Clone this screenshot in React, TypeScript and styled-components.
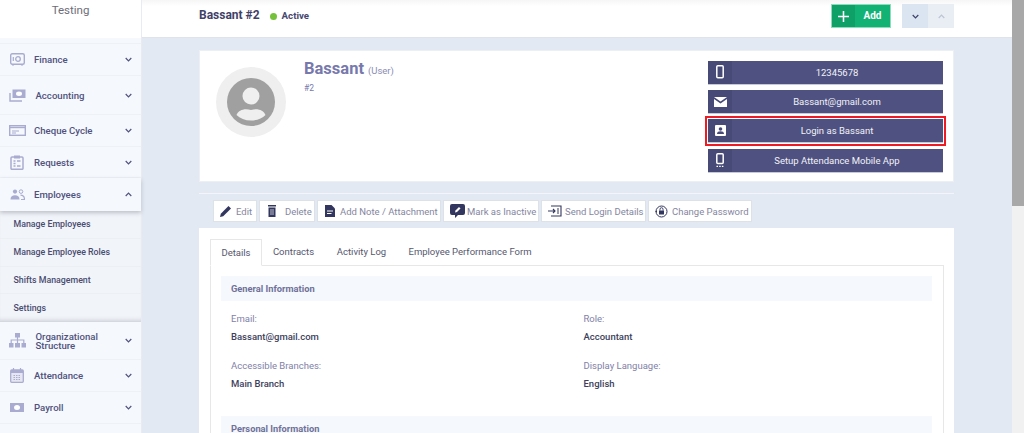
import React from "react";
import styled, { createGlobalStyle } from "styled-components";

const Global = createGlobalStyle`
  html, body { margin: 0; padding: 0; height: 433px; overflow: hidden; background: #e3e9f2; }
  * { box-sizing: border-box; }
  body { font-family: Roboto, "Liberation Sans", sans-serif; }
  svg { flex: none; display: block; }
`;

const Page = styled.div`
  display: flex;
  width: 1024px;
  height: 433px;
  overflow: hidden;
`;

const Sidebar = styled.aside`
  width: 142px;
  flex: none;
  background: #f5f8fc;
  border-right: 1px solid #e8ecf2;
  display: flex;
  flex-direction: column;
  position: relative;
  z-index: 2;
`;

const Brand = styled.div`
  height: 38px;
  background: #fff;
  color: #6d6d78;
  font-size: 11.5px;
  text-align: center;
  padding-top: 3px;
  line-height: 14px;
`;

const Spacer = styled.div`
  height: 6px;
  border-bottom: 1px solid #eef1f6;
`;

const MenuRow = styled.div<{ $h: number; $open?: boolean }>`
  height: ${(p) => p.$h}px;
  flex: none;
  display: flex;
  align-items: center;
  padding: 0 9px 0 9px;
  border-bottom: 1px solid #eef1f6;
  color: #50527e;
  font-size: 9.6px;
  font-weight: 500;
  line-height: 9px;
  ${(p) => (p.$open ? "box-shadow: 0 2px 4px rgba(60,60,80,.28); position: relative; z-index: 1; border-bottom: 0;" : "")}
`;

const MenuIcon = styled.span<{ $w: number; $in?: number }>`
  width: ${(p) => p.$w}px;
  padding-left: ${(p) => p.$in ?? 0}px;
  flex: none;
  display: flex;
  align-items: center;
`;

const MenuLabel = styled.span`
  flex: 1;
`;

const SubMenu = styled.div`
  background: #f1f4f9;
  box-shadow: inset 0 -5px 5px -4px rgba(60,60,80,.25);
  flex: none;
`;

const SubItem = styled.div`
  height: 27.8px;
  padding-left: 13.5px;
  display: flex;
  align-items: center;
  border-bottom: 1px solid #ecf0f5;
  color: #4a4c70;
  font-size: 8.8px;
  font-weight: 500;
  &:last-child { border-bottom: 0; }
`;

const Main = styled.main`
  flex: 1;
  min-width: 0;
  display: flex;
  flex-direction: column;
  background: #e3e9f2;
`;

const TopBar = styled.header`
  height: 38px;
  flex: none;
  background: linear-gradient(#f6f6f6, #fff 6px);
  border-bottom: 1px solid #dfe4ec;
  padding: 4px 58px 0 57px;
  display: flex;
  align-items: flex-start;
`;

const PageTitle = styled.h1`
  margin: 3px 0 0;
  font-size: 12px;
  line-height: 16px;
  font-weight: 700;
  color: #3f4168;
`;

const StatusDot = styled.span`
  width: 7px;
  height: 7px;
  border-radius: 50%;
  background: #76c13a;
  margin: 9px 0 0 10px;
`;

const StatusText = styled.span`
  margin: 4px 0 0 5px;
  font-size: 9.7px;
  line-height: 16px;
  font-weight: 700;
  color: #46486f;
  flex: 1;
`;

const AddButton = styled.div`
  width: 60px;
  height: 24px;
  display: flex;
  background: #12b174;
  border: 1px solid #8fdcbc;
  color: #fff;
  font-size: 10px;
  font-weight: 700;
`;

const AddIcon = styled.span`
  width: 23px;
  background: #0fa068;
  display: flex;
  align-items: center;
  justify-content: center;
`;

const AddLabel = styled.span`
  flex: 1;
  text-align: center;
  line-height: 22px;
`;

const Toggle = styled.div<{ $on?: boolean }>`
  width: 26px;
  height: 24px;
  background: ${(p) => (p.$on ? "#dbe5f1" : "#e9eef5")};
  display: flex;
  align-items: center;
  justify-content: center;
`;

const ToggleGroup = styled.div`
  display: flex;
  margin-left: 11px;
`;

const Content = styled.div`
  padding: 12px 58px 0 57px;
  display: flex;
  flex-direction: column;
`;

const ProfileCard = styled.section`
  height: 132px;
  background: #fff;
  border: 1px solid #eceff4;
  display: flex;
  padding: 16px 10px 0 16px;
`;

const Avatar = styled.div`
  width: 70px;
  height: 70px;
  border-radius: 50%;
  background: #efefef;
  display: flex;
  align-items: center;
  justify-content: center;
`;

const Who = styled.div`
  margin-left: 18px;
  flex: 1;
  margin-top: -10px;
`;

const Name = styled.div`
  color: #7779ad;
  font-size: 16.5px;
  font-weight: 700;
  line-height: 24px;
`;

const UserTag = styled.span`
  font-size: 9.5px;
  font-weight: 400;
  color: #8a8cb4;
  margin-left: 4px;
`;

const IdTag = styled.div`
  color: #7779ad;
  font-size: 8.5px;
  line-height: 12px;
  margin-top: -1px;
`;

const ActionColumn = styled.div`
  width: 235px;
  display: flex;
  flex-direction: column;
  gap: 5.3px;
  margin-top: -6.3px;
`;

const ActionButton = styled.div<{ $hl?: boolean }>`
  height: 24px;
  flex: none;
  background: #4f5280;
  border-bottom: 1px solid #c6c9da;
  color: #f1f1f8;
  font-size: 9.5px;
  display: flex;
  align-items: center;
  position: relative;
  ${(p) => (p.$hl ? "outline: 2px solid #ed1c24; outline-offset: 1px;" : "")}
`;

const ActionIcon = styled.span`
  width: 24px;
  height: 100%;
  background: #474a76;
  display: flex;
  align-items: center;
  justify-content: center;
  flex: none;
`;

const ActionLabel = styled.span`
  flex: 1;
  text-align: center;
  padding-right: 1px;
`;

const DetailPanel = styled.section`
  margin-top: 11px;
  background: #fff;
`;

const ToolBar = styled.div`
  height: 35px;
  background: #e3e9f2;
  border-top: 1px solid #f3f5f9;
  padding: 6px 14px;
  display: flex;
  gap: 2px;
`;

const ToolButton = styled.div<{ $w: number; $gap?: number }>`
  width: ${(p) => p.$w}px;
  height: 22px;
  background: #fff;
  border: 1px solid #dde1e8;
  color: #85869f;
  font-size: 9.5px;
  display: flex;
  align-items: center;
  padding-left: 6px;
  gap: ${(p) => p.$gap ?? 4}px;
  white-space: nowrap;
`;

const Body = styled.div`
  padding: 11px 10px 0 11px;
`;

const Tabs = styled.div`
  display: flex;
  height: 27px;
  border-bottom: 1px solid #e7e7e7;
`;

const Tab = styled.div<{ $active?: boolean; $w: number }>`
  width: ${(p) => p.$w}px;
  height: 27px;
  font-size: 9.5px;
  line-height: 26px;
  text-align: center;
  color: #55576f;
  ${(p) =>
    p.$active
      ? "background:#fff;border:1px solid #e7e7e7;border-bottom-color:#fff;"
      : ""}
`;

const TabBody = styled.div`
  border-left: 1px solid #e7e7e7;
  border-right: 1px solid #e7e7e7;
  padding: 10px 11px 0 10px;
  height: 200px;
`;

const SectionTitle = styled.div`
  height: 25px;
  background: #f5f8fc;
  padding-left: 10px;
  color: #6f7199;
  font-size: 9.3px;
  font-weight: 700;
  line-height: 25px;
`;

const FieldGrid = styled.div`
  display: grid;
  grid-template-columns: 352.5px 1fr;
  align-content: start;
  padding: 9px 10px 0;
  row-gap: 11px;
  height: 115px;
`;

const Field = styled.div`
  font-size: 9.5px;
`;

const FieldLabel = styled.div`
  color: #7f81a8;
  line-height: 18px;
`;

const FieldValue = styled.div`
  color: #3d3f5c;
  font-weight: 500;
  line-height: 18px;
`;

const ScrollTrack = styled.div`
  width: 12px;
  flex: none;
  background: #f1f1f1;
`;

const ScrollThumb = styled.div`
  height: 206px;
  background: #a8a8a8;
`;

const Ic = ({ children, w = 18, h = 16, vb = "0 0 24 24" }: { children: React.ReactNode; w?: number; h?: number; vb?: string }) => (
  <svg width={w} height={h} viewBox={vb} fill="none">{children}</svg>
);

const Chevron = ({ up, c = "#50527e" }: { up?: boolean; c?: string }) => (
  <svg width="7" height="5" viewBox="0 0 7 5" fill="none">
    <path d={up ? "M.7 4 3.500 1.200 6.300 4" : "M.7 1l2.800 2.800L6.300 1"} stroke={c} strokeWidth="1.200" />
  </svg>
);

const sc = "#a9abd0";

const SafeIcon = () => (
  <Ic w={15} h={13} vb="0 0 15 13">
    <rect x=".7" y=".7" width="13.600" height="10.600" rx="1.500" stroke={sc} strokeWidth="1.400" />
    <circle cx="8" cy="6" r="2.300" stroke={sc} strokeWidth="1.300" />
    <path d="M3.300 4v4M2 12h2M11 12h2" stroke={sc} strokeWidth="1.200" />
  </Ic>
);
const MoneyIcon = () => (
  <Ic w={17} h={13} vb="0 0 17 13">
    <rect x="3.500" y=".5" width="13" height="8.500" fill={sc} />
    <ellipse cx="10" cy="4.800" rx="3" ry="2.200" fill="#fff" />
    <path d="M1 4v8h12" stroke={sc} strokeWidth="1.400" />
  </Ic>
);
const ChequeIcon = () => (
  <Ic w={17} h={11} vb="0 0 17 11">
    <rect x=".7" y=".7" width="15.600" height="9.600" stroke={sc} strokeWidth="1.400" />
    <path d="M0 2.500h17" stroke={sc} strokeWidth="1.400" />
    <path d="M3 6h7M3 8h4" stroke={sc} strokeWidth="1" />
  </Ic>
);
const ClipIcon = () => (
  <Ic w={14} h={15} vb="0 0 14 15">
    <rect x="1" y="2" width="12" height="12.300" rx="1" stroke={sc} strokeWidth="1.500" />
    <rect x="4" y=".5" width="6" height="3" fill={sc} />
    <path d="M3.500 6h2M7 6h3.500M3.500 8.500h2M3.500 11h2M7 11h3.500" stroke={sc} strokeWidth="1.300" />
  </Ic>
);
const PeopleIcon = () => (
  <Ic w={15} h={11} vb="0 0 15 11">
    <circle cx="5" cy="2.600" r="2.100" fill={sc} />
    <circle cx="11" cy="2.600" r="1.800" stroke={sc} strokeWidth="1" />
    <path d="M.5 10.500c0-3 1.800-4.300 4.500-4.300s4.500 1.300 4.500 4.300z" fill={sc} />
    <path d="M10.500 6.200c2.500 0 4 1.300 4 4.300h-3.500" stroke={sc} strokeWidth="1.200" />
  </Ic>
);
const OrgIcon = () => (
  <Ic w={17} h={15} vb="0 0 17 15">
    <rect x="6" y="0" width="5" height="4.500" fill={sc} />
    <rect x="0" y="10" width="4.500" height="4.500" fill={sc} />
    <rect x="6" y="10" width="5" height="4.500" fill={sc} />
    <rect x="12.500" y="10" width="4.500" height="4.500" fill={sc} />
    <path d="M8.500 4v6M2.200 10V7h12.600v3" stroke={sc} strokeWidth="1.200" />
  </Ic>
);
const CalIcon = () => (
  <Ic w={14} h={15} vb="0 0 14 15">
    <rect x=".7" y="2" width="12.600" height="12.300" rx="1" fill="#e5e6f2" stroke={sc} strokeWidth="1.300" />
    <rect x="1" y="2" width="12" height="3" fill={sc} />
    <path d="M3.500 0v3M10.500 0v3" stroke={sc} strokeWidth="1.200" />
    <path d="M3.500 7.500h7M3.500 9.500h7M3.500 11.500h7" stroke={sc} strokeWidth="1.200" strokeDasharray="1.500 1" />
  </Ic>
);
const CashIcon = () => (
  <Ic w={14} h={9} vb="0 0 14 9">
    <rect width="14" height="9" fill={sc} />
    <ellipse cx="7" cy="4.500" rx="3" ry="2.500" fill="#fff" />
  </Ic>
);

const Phone = ({ dots }: { dots?: boolean }) => (
  <Ic w={8} h={14} vb="0 0 8 14">
    <rect x=".8" y=".8" width="6.400" height={dots ? 9.800 : 11.900} rx="1" stroke="#fff" strokeWidth="1.500" />
    {dots && <path d="M.5 13.300h7" stroke="#fff" strokeWidth="1.200" strokeDasharray="1.500 1.200" />}
  </Ic>
);

const Mail = () => (
  <Ic w={13} h={10} vb="0 0 13 10">
    <path d="M0 0h13L6.500 4.500zM0 2l6.500 4.500L13 2v8H0z" fill="#fff" />
  </Ic>
);

const Contact = () => (
  <Ic w={11} h={11} vb="0 0 11 11">
    <rect width="11" height="11" rx="1" fill="#fff" />
    <circle cx="5.500" cy="4" r="1.800" fill="#474a76" />
    <path d="M2 9c0-2 1.500-2.700 3.500-2.700S9 7 9 9z" fill="#474a76" />
  </Ic>
);

const dk = "#33365e";

export default function App() {
  return (
    <Page>
      <Global />
      <Sidebar>
        <Brand>Testing</Brand>
        <Spacer />
        <MenuRow $h={32}><MenuIcon $w={25} $in={1}><SafeIcon /></MenuIcon><MenuLabel>Finance</MenuLabel><Chevron /></MenuRow>
        <MenuRow $h={39}><MenuIcon $w={26.500}><MoneyIcon /></MenuIcon><MenuLabel>Accounting</MenuLabel><Chevron /></MenuRow>
        <MenuRow $h={32}><MenuIcon $w={25}><ChequeIcon /></MenuIcon><MenuLabel>Cheque Cycle</MenuLabel><Chevron /></MenuRow>
        <MenuRow $h={31}><MenuIcon $w={25} $in={1}><ClipIcon /></MenuIcon><MenuLabel>Requests</MenuLabel><Chevron /></MenuRow>
        <MenuRow $h={33} $open><MenuIcon $w={25} $in={1}><PeopleIcon /></MenuIcon><MenuLabel>Employees</MenuLabel><Chevron up /></MenuRow>
        <SubMenu>
          <SubItem>Manage Employees</SubItem>
          <SubItem>Manage Employee Roles</SubItem>
          <SubItem>Shifts Management</SubItem>
          <SubItem>Settings</SubItem>
        </SubMenu>
        <MenuRow $h={38}><MenuIcon $w={26.500}><OrgIcon /></MenuIcon><MenuLabel>Organizational<br />Structure</MenuLabel><Chevron /></MenuRow>
        <MenuRow $h={32}><MenuIcon $w={25} $in={1}><CalIcon /></MenuIcon><MenuLabel>Attendance</MenuLabel><Chevron /></MenuRow>
        <MenuRow $h={32}><MenuIcon $w={25} $in={1}><CashIcon /></MenuIcon><MenuLabel>Payroll</MenuLabel><Chevron /></MenuRow>
      </Sidebar>
      <Main>
        <TopBar>
          <PageTitle>Bassant #2</PageTitle>
          <StatusDot />
          <StatusText>Active</StatusText>
          <AddButton>
            <AddIcon>
              <svg width="11" height="11" viewBox="0 0 12 12"><path d="M6 0v12M0 6h12" stroke="#fff" strokeWidth="1.700" /></svg>
            </AddIcon>
            <AddLabel>Add</AddLabel>
          </AddButton>
          <ToggleGroup>
            <Toggle $on><Chevron c="#3f4168" /></Toggle>
            <Toggle><Chevron up c="#bcc5d2" /></Toggle>
          </ToggleGroup>
        </TopBar>
        <Content>
          <ProfileCard>
            <Avatar>
              <svg width="48" height="48" viewBox="0 0 48 48">
                <circle cx="24" cy="24" r="24" fill="#a0a0a0" />
                <circle cx="24" cy="18" r="8.500" fill="#efefef" />
                <path d="M9.500 37c2-5 8-7 14.500-5 6.500-2 12.500 0 14.500 5-3.500 3.500-8.500 5.500-14.500 5.500S13 40.500 9.500 37z" fill="#efefef" />
              </svg>
            </Avatar>
            <Who>
              <Name>Bassant<UserTag>(User)</UserTag></Name>
              <IdTag>#2</IdTag>
            </Who>
            <ActionColumn>
              <ActionButton><ActionIcon><Phone /></ActionIcon><ActionLabel>12345678</ActionLabel></ActionButton>
              <ActionButton><ActionIcon><Mail /></ActionIcon><ActionLabel>Bassant@gmail.com</ActionLabel></ActionButton>
              <ActionButton $hl><ActionIcon><Contact /></ActionIcon><ActionLabel>Login as Bassant</ActionLabel></ActionButton>
              <ActionButton><ActionIcon><Phone dots /></ActionIcon><ActionLabel>Setup Attendance Mobile App</ActionLabel></ActionButton>
            </ActionColumn>
          </ProfileCard>
          <DetailPanel>
            <ToolBar>
              <ToolButton $w={44}>
                <Ic w={12} h={12} vb="0 0 12 12"><path d="M0 12l.8-3.200L8.500 1 11 3.500 3.200 11.200z" fill={dk} /></Ic>
                Edit
              </ToolButton>
              <ToolButton $w={56} $gap={7}>
                <Ic w={12} h={12} vb="0 0 12 12"><path d="M2 0h8v1.500H2zM2.500 2.500h7V12h-7z" fill={dk} /><path d="M5 4v6M7 4v6" stroke="#fff" strokeWidth=".7" /></Ic>
                Delete
              </ToolButton>
              <ToolButton $w={124}>
                <Ic w={12} h={12} vb="0 0 12 12"><path d="M1 0h6.500L11 3.500V12H1z" fill={dk} /><path d="M3 6h6M3 8.500h4.500" stroke="#fff" strokeWidth="1" /></Ic>
                Add Note / Attachment
              </ToolButton>
              <ToolButton $w={96} $gap={2}>
                <Ic w={15} h={14} vb="0 0 15 14"><path d="M2 0h11a2 2 0 012 2v7a2 2 0 01-2 2H8l-3 3v-3H2a2 2 0 01-2-2V2a2 2 0 012-2z" fill={dk} /><path d="M5 8.500l.5-2L9 3l1.500 1.500-3.500 3.500z" fill="#fff" /></Ic>
                Mark as Inactive
              </ToolButton>
              <ToolButton $w={105} $gap={3}>
                <Ic w={14} h={12} vb="0 0 14 12"><path d="M3 1h10v10H3M0 6h7M5 4l2 2-2 2M9 4h2M9 6h2M9 8h2" stroke={dk} strokeWidth="1.100" /></Ic>
                Send Login Details
              </ToolButton>
              <ToolButton $w={104}>
                <Ic w={13} h={13} vb="0 0 13 13"><circle cx="6.500" cy="6.500" r="5.500" stroke={dk} strokeWidth="1" /><rect x="4" y="5.500" width="5" height="4" fill={dk} /><path d="M5 5.500V4.200a1.500 1.500 0 013 0v1.300" stroke={dk} strokeWidth=".9" /><path d="M0 6.500l2-1v2z" fill={dk} /></Ic>
                Change Password
              </ToolButton>
            </ToolBar>
            <Body>
              <Tabs>
                <Tab $active $w={52}>Details</Tab>
                <Tab $w={63}>Contracts</Tab>
                <Tab $w={73}>Activity Log</Tab>
                <Tab $w={144}>Employee Performance Form</Tab>
              </Tabs>
              <TabBody>
                <SectionTitle>General Information</SectionTitle>
                <FieldGrid>
                  <Field><FieldLabel>Email:</FieldLabel><FieldValue>Bassant@gmail.com</FieldValue></Field>
                  <Field><FieldLabel>Role:</FieldLabel><FieldValue>Accountant</FieldValue></Field>
                  <Field><FieldLabel>Accessible Branches:</FieldLabel><FieldValue>Main Branch</FieldValue></Field>
                  <Field><FieldLabel>Display Language:</FieldLabel><FieldValue>English</FieldValue></Field>
                </FieldGrid>
                <SectionTitle>Personal Information</SectionTitle>
              </TabBody>
            </Body>
          </DetailPanel>
        </Content>
      </Main>
      <ScrollTrack><ScrollThumb /></ScrollTrack>
    </Page>
  );
}
